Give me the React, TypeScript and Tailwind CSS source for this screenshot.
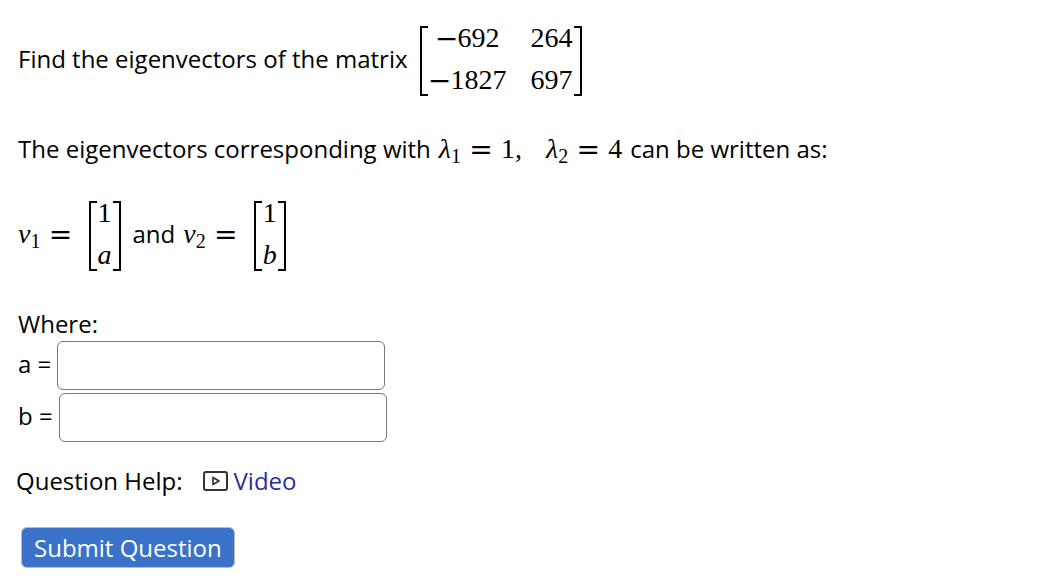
import React from 'react';

const Sub: React.FC<{ base: string; index: number }> = ({ base, index }) => (
  <span className="leading-none">
    <i>{base}</i>
    <sub className="text-xl">{index}</sub>
  </span>
);

const Math: React.FC<{ children: React.ReactNode }> = ({ children }) => (
  <span className="flex items-baseline font-['Liberation_Serif',serif] text-[28px]">{children}</span>
);

const Op: React.FC<{ children: React.ReactNode }> = ({ children }) => (
  <span className="font-['DejaVu_Math_TeX_Gyre','Liberation_Serif',serif] leading-none">{children}</span>
);

const Equals: React.FC = () => (
  <span className="mx-[9px]">
    <Op>=</Op>
  </span>
);

const Negative: React.FC<{ value: number }> = ({ value }) => (
  <span>
    <Op>−</Op>
    {value}
  </span>
);

// Column-major, so each column is centred on its own width
const Matrix: React.FC<{ columns: React.ReactNode[][] }> = ({ columns }) => (
  <span className="flex h-[70px] items-stretch font-['Liberation_Serif',serif] text-[28px] leading-7">
    <span className="w-2 border-y-2 border-l-2 border-black" />
    <span className="flex items-center gap-6 px-px pb-1">
      {columns.map((column, i) => (
        <span key={i} className="flex flex-col items-center gap-[14px]">
          {column.map((cell, j) => (
            <span key={j} className="h-7">
              {cell}
            </span>
          ))}
        </span>
      ))}
    </span>
    <span className="w-2 border-y-2 border-r-2 border-black" />
  </span>
);

const VideoIcon: React.FC = () => (
  <svg className="h-5 w-[25px]" viewBox="0 0 25 20" fill="none" stroke="#333333" aria-hidden="true">
    <rect x="1" y="1" width="23" height="18" rx="2" strokeWidth="2" />
    <path d="M10 6.5v7l6-3.5z" strokeWidth="1.7" strokeLinejoin="round" />
  </svg>
);

const answers = ['a', 'b'];

export default function App() {
  return (
    <main className="min-h-screen bg-white px-4 pt-[26px] font-['Open_Sans',sans-serif] text-2xl leading-[34px] text-black">
      <div className="px-0.5">
        <div className="flex items-center">
          <span className="pb-1">Find the eigenvectors of the matrix</span>
          <span className="ml-3">
            <Matrix columns={[[<Negative value={692} />, <Negative value={1827} />], ['264', '697']]} />
          </span>
        </div>

        <div className="mt-9 flex items-baseline">
          <span className="mr-2">The eigenvectors corresponding with</span>
          <Math>
            <Sub base="λ" index={1} />
            <Equals />
            <span>1,</span>
            <span className="ml-6">
              <Sub base="λ" index={2} />
            </span>
            <Equals />
            <span>4</span>
          </Math>
          <span className="ml-2">can be written as:</span>
        </div>

        <div className="mt-[35px] flex items-center">
          <span className="pb-1">
            <Math>
              <Sub base="v" index={1} />
              <Equals />
            </Math>
          </span>
          <span className="ml-2">
            <Matrix columns={[['1', <i>a</i>]]} />
          </span>
          <span className="flex items-baseline pb-1">
            <span className="ml-3 mr-2">and</span>
            <Math>
              <Sub base="v" index={2} />
              <Equals />
            </Math>
          </span>
          <span className="ml-2">
            <Matrix columns={[['1', <i>b</i>]]} />
          </span>
        </div>

        <div className="mt-9">Where:</div>
        <div className="flex flex-col gap-[3px]">
          {answers.map((name) => (
            <div key={name} className="flex items-center gap-1.5">
              <label htmlFor={name} className="pb-1">
                {name} =
              </label>
              <input
                id={name}
                type="text"
                className="h-[49px] w-full max-w-[328px] rounded-md border border-[#767676] bg-white px-2"
              />
            </div>
          ))}
        </div>
      </div>

      <div className="mt-[22px] flex items-center">
        <span>Question Help:</span>
        <a href="#video" className="ml-5 flex items-center gap-1.5 text-[#2c2ca0]">
          <VideoIcon />
          Video
        </a>
      </div>

      <button
        type="button"
        className="mt-[29px] ml-[5px] h-[41px] rounded-md border border-[#bbbbbb] bg-[#3a72c9] px-3 leading-[34px] text-white"
      >
        Submit Question
      </button>
    </main>
  );
}
